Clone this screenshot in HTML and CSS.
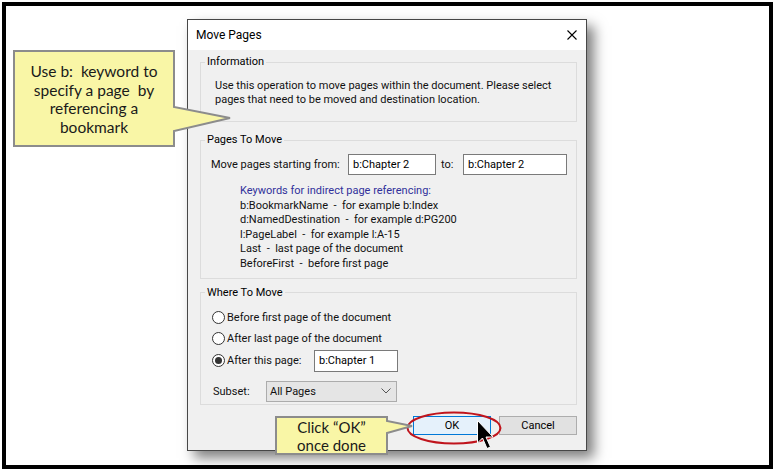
FILE: index.html
```html
<!DOCTYPE html>
<html lang="en">
<head>
  <meta charset="UTF-8">
  <title>Move Pages</title>
  <link rel="stylesheet" href="styles.css">
</head>
<body>
  <div class="frame">
    <div class="dialog">
      <div class="titlebar">
        <span>Move Pages</span>
        <svg class="close" width="10" height="10" viewBox="0 0 10 10">
          <path d="M0.5 0.5 L9.5 9.5 M9.5 0.5 L0.5 9.5" stroke="#000" stroke-width="1.1" fill="none"/>
        </svg>
      </div>
      <div class="content">
        <fieldset class="group info">
          <legend>Information</legend>
          <p>Use this operation to move pages within the document. Please select<br>pages that need to be moved and destination location.</p>
        </fieldset>

        <fieldset class="group pages">
          <legend>Pages To Move</legend>
          <div class="range">
            <label class="from-label">Move pages starting from:</label>
            <input class="field from" type="text" value="b:Chapter 2">
            <label class="to-label">to:</label>
            <input class="field to" type="text" value="b:Chapter 2">
          </div>
          <div class="keywords">
            <div class="keywords-title">Keywords for indirect page referencing:</div>
            <div>b:BookmarkName&nbsp; -&nbsp; for example b:Index</div>
            <div>d:NamedDestination&nbsp; -&nbsp; for example d:PG200</div>
            <div>l:PageLabel&nbsp; -&nbsp; for example l:A-15</div>
            <div>Last&nbsp; -&nbsp; last page of the document</div>
            <div>BeforeFirst&nbsp; -&nbsp; before first page</div>
          </div>
        </fieldset>

        <fieldset class="group where">
          <legend>Where To Move</legend>
          <div class="option">
            <span class="radio"></span>
            <span>Before first page of the document</span>
          </div>
          <div class="option">
            <span class="radio"></span>
            <span>After last page of the document</span>
          </div>
          <div class="option this-page">
            <span class="radio checked"></span>
            <span class="option-label">After this page:</span>
            <input class="field after" type="text" value="b:Chapter 1">
          </div>
          <div class="subset">
            <span class="subset-label">Subset:</span>
            <div class="select">
              <span>All Pages</span>
              <svg width="10" height="6" viewBox="0 0 10 6">
                <path d="M0.5 0.5 L5 5 L9.5 0.5" stroke="#555" stroke-width="1" fill="none"/>
              </svg>
            </div>
          </div>
        </fieldset>

        <div class="buttons">
          <button class="btn default">OK</button>
          <button class="btn">Cancel</button>
        </div>
      </div>
    </div>

    <svg class="ring" width="96" height="34" viewBox="0 0 96 34">
      <ellipse cx="48" cy="17" rx="46.5" ry="15.5" fill="none" stroke="#c0141c" stroke-width="2"/>
    </svg>

    <div class="callout callout-ok">
      <svg class="callout-shape" width="140" height="39" viewBox="0 0 140 39">
        <polygon points="1,1 112,1 112,5 137,10 112,17 112,38 1,38" fill="#f9f6a6" stroke="#8c8c8c" stroke-width="2" stroke-linejoin="miter"/>
      </svg>
      <p>Click “OK”<br>once done</p>
    </div>

    <svg class="cursor" width="20" height="30" viewBox="0 0 20 30">
      <path d="M0.5 0.5 L0.5 23 L5.5 18 L10 28.5 L13.5 27 L9 17 L16 17 Z" fill="#000" stroke="#fff" stroke-width="1"/>
    </svg>

    <div class="callout callout-bookmark">
      <svg class="callout-shape" width="220" height="97" viewBox="0 0 220 97">
        <polygon points="1,1 161,1 161,57 217,68 161,81 161,96 1,96" fill="#f9f6a6" stroke="#8c8c8c" stroke-width="2" stroke-linejoin="miter"/>
      </svg>
      <p>Use b:&nbsp; keyword to<br>specify a page&nbsp; by<br>referencing a<br>bookmark</p>
    </div>
  </div>
</body>
</html>
```

FILE: styles.css
```css
body {
  margin: 0;
  background: #fff;
  font-family: Roboto, "Noto Sans", sans-serif;
  font-size: 11px;
  color: #111;
}
.frame {
  position: relative;
  margin: 2px;
  width: 771px;
  height: 467px;
  box-sizing: border-box;
  border: 4px solid #000;
  background: #fff;
  overflow: hidden;
}
.dialog {
  margin: 13px 0 0 181px;
  width: 400px;
  height: 432px;
  box-sizing: border-box;
  border: 1px solid #474747;
  background: #f0f0f0;
  box-shadow: 7px 7px 12px rgba(0, 0, 0, 0.5);
  display: flex;
  flex-direction: column;
}
.titlebar {
  height: 30px;
  background: #fff;
  display: flex;
  align-items: center;
  justify-content: space-between;
  padding: 0 9px 0 8px;
  font-size: 12px;
  color: #000;
}
.content {
  flex: 1;
  padding: 5px 9px 0 12px;
}
.group {
  margin: 0;
  padding: 0 0 0 4px;
  border: 1px solid #dcdcdc;
  min-width: 0;
}
.group legend {
  padding: 0 2px;
  line-height: 14px;
  color: #000;
}
.info p {
  margin: 0;
  padding: 10px 0 14px 10px;
  line-height: 14px;
}
.pages {
  margin-top: 11px;
}
.range {
  margin-top: 7px;
  padding-left: 6px;
  display: flex;
  align-items: center;
  height: 21px;
}
.from-label {
  width: 137px;
}
.to-label {
  width: 22px;
  padding-left: 5px;
}
.field {
  box-sizing: border-box;
  height: 21px;
  margin: 0;
  padding: 0 4px;
  border: 1px solid #7a7a7a;
  background: #fff;
  font: inherit;
  color: #000;
  outline: none;
}
.from {
  width: 88px;
}
.to {
  width: 104px;
}
.keywords {
  margin-top: 9px;
  padding: 0 0 6px 35px;
  line-height: 14.6px;
}
.keywords-title {
  color: #31319b;
}
.where {
  margin-top: 7px;
}
.option {
  display: flex;
  align-items: center;
  height: 21px;
  padding-left: 7px;
}
.option:first-of-type {
  margin-top: 7px;
}
.radio {
  width: 13px;
  height: 13px;
  box-sizing: border-box;
  border: 1px solid #333;
  border-radius: 50%;
  background: #fff;
  margin-right: 2px;
  display: flex;
  align-items: center;
  justify-content: center;
}
.radio.checked::after {
  content: "";
  width: 7px;
  height: 7px;
  border-radius: 50%;
  background: #333;
}
.this-page {
  height: 22px;
  margin-top: 1px;
}
.option-label {
  width: 87px;
}
.after {
  width: 84px;
  height: 22px;
}
.subset {
  display: flex;
  align-items: center;
  height: 21px;
  margin-top: 9px;
  padding: 0 0 2px 8px;
}
.subset-label {
  width: 53px;
}
.select {
  box-sizing: border-box;
  width: 131px;
  height: 21px;
  border: 1px solid #acacac;
  background: #e5e5e5;
  display: flex;
  align-items: center;
  justify-content: space-between;
  padding: 0 5px 0 3px;
}
.buttons {
  display: flex;
  justify-content: flex-end;
  gap: 8px;
  padding-top: 11px;
}
.btn {
  width: 78px;
  height: 19px;
  box-sizing: border-box;
  border: 1px solid #adadad;
  background: #e1e1e1;
  font: inherit;
  color: #000;
  padding: 0;
}
.btn.default {
  border-color: #0078d7;
  background: #e5f1fb;
}
.ring {
  position: absolute;
  left: 400px;
  top: 405px;
}
.cursor {
  position: absolute;
  left: 471px;
  top: 414px;
}
.callout {
  position: absolute;
  font-family: Lato, "Open Sans", sans-serif;
  color: #1a1a1a;
}
.callout-shape {
  position: absolute;
  left: 0;
  top: 0;
  overflow: visible;
}
.callout p {
  position: relative;
  margin: 0;
  text-align: center;
}
.callout-bookmark {
  left: 7px;
  top: 44px;
  width: 162px;
  height: 97px;
}
.callout-bookmark p {
  padding-top: 12px;
  font-size: 15.5px;
  line-height: 18.7px;
}
.callout-ok {
  left: 269px;
  top: 410px;
  width: 113px;
  height: 39px;
}
.callout-ok p {
  padding-top: 2px;
  font-size: 15px;
  line-height: 18px;
}
```
